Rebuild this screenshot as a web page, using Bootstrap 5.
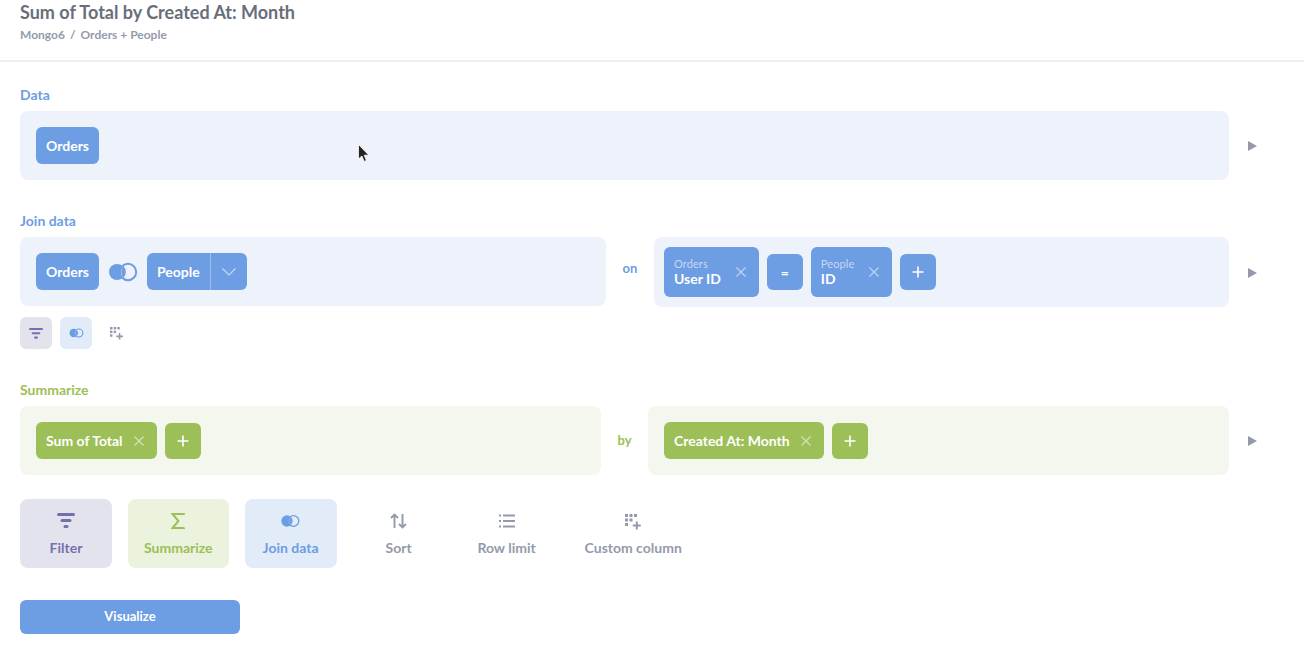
<!DOCTYPE html>
<html lang="en">
<head>
<meta charset="utf-8">
<title>Sum of Total by Created At: Month</title>
<link rel="stylesheet" href="https://cdn.jsdelivr.net/npm/bootstrap@5.3.0/dist/css/bootstrap.min.css">
<style>
body{font-family:Lato,"Liberation Sans",sans-serif;background:#fff;color:#696e7b;font-weight:700}
.qb-head{height:62px;border-bottom:2px solid #eeeff0;padding-left:20px}
.qb-title{font-size:18px;line-height:24px;color:#696e7b;margin:0;font-weight:700}
.qb-crumb{font-size:12px;line-height:16px;color:#949aab;margin-top:3px}
.qb-crumb span{margin:0 5px}
.qb-main{padding:23px 0 0 20px;position:relative}
.qb-label{font-size:14px;line-height:20px;margin-bottom:6px}
.t-blue{color:#6d9de3}.t-green{color:#9cbf57}
.qb-sec{margin-bottom:31px}
.qb-sec.tight{margin-bottom:24px}
.qb-panel{border-radius:8px;padding:16px;height:69px;background:#eef3fb}
.qb-panel.green{background:#f4f7ed}
.qb-panel.cond{padding:10px;height:70px}
.qb-wide{width:1209px}
.qb-left-join{width:586px}
.qb-half{width:581px}
.qb-word{width:48px;text-align:center;font-size:13px}
.qb-word.by{width:47px}
.qb-arrow{margin-left:19px;width:0;height:0;border-left:9px solid #949aab;border-top:5px solid transparent;border-bottom:5px solid transparent}
.qb-pill{display:inline-flex;align-items:center;height:37px;padding:0 10px;border-radius:6px;color:#fff;font-size:14px;background:#6d9de3}
.qb-pill.green{background:#9cbf57}
.qb-sq{display:inline-flex;align-items:center;justify-content:center;width:36px;height:36px;border-radius:6px;color:#fff;background:#6d9de3;font-size:14px}
.qb-sq.green{background:#9cbf57}
.qb-x{margin-left:10px;margin-right:2px;display:block;opacity:.55}
.qb-token{display:inline-flex;align-items:center;height:50px;padding:0 12px 0 10px;border-radius:6px;background:#6d9de3;color:#fff;font-size:14px}
.qb-token small{display:block;font-size:11px;line-height:13px;font-weight:400;color:#c5d8f4;letter-spacing:.1px}
.qb-token b{display:block;line-height:17px;font-weight:700}
.qb-token .tk-txt{margin-top:-1px}
.qb-split{padding:0;overflow:hidden}
.qb-split .sp-l{padding:0 10px;height:100%;display:flex;align-items:center;border-right:1px solid #9ebde9}
.qb-split .sp-r{width:36px;height:100%;display:flex;align-items:center;justify-content:center}
.qb-mini{width:32px;height:32px;border-radius:6px;display:flex;align-items:center;justify-content:center}
.bg-fil{background:#e3e3ee}.bg-sum{background:#ebf2de}.bg-joi{background:#e2ebf8}
.qb-tile{min-width:92px;height:69px;padding:0 16px;border-radius:8px;font-size:14px;display:flex;flex-direction:column;align-items:center;text-align:center}
.qb-tile svg{display:block;margin-top:13px;height:18px}
.qb-tile div{margin-top:8px;line-height:20px}
.t-pur{color:#7172ad}.t-gray{color:#949aab}
.qb-vis{width:220px;height:34px;margin-top:32px;background:#6d9de3;border:0;border-radius:6px;color:#fff;font-weight:700;font-size:13px;padding:0}
.qb-cursor{position:absolute;left:358px;top:82px;display:block}
</style>
</head>
<body>
<header class="qb-head">
  <h1 class="qb-title">Sum of Total by Created At: Month</h1>
  <div class="qb-crumb">Mongo6<span>/</span>Orders + People</div>
</header>
<main class="qb-main">
  <section class="qb-sec">
    <div class="qb-label t-blue">Data</div>
    <div class="d-flex align-items-center">
      <div class="qb-panel qb-wide d-flex align-items-center"><span class="qb-pill">Orders</span></div>
      <div class="qb-arrow"></div>
    </div>
  </section>

  <section class="qb-sec">
    <div class="qb-label t-blue">Join data</div>
    <div class="d-flex align-items-start">
      <div class="qb-panel qb-left-join d-flex align-items-center">
        <span class="qb-pill">Orders</span>
        <svg class="mx-2" width="32" height="20" viewBox="0 0 32 20" style="display:block"><circle cx="10" cy="10" r="8" fill="#6d9de3"/><circle cx="21" cy="10" r="8.2" fill="#eef3fb" stroke="#6d9de3" stroke-width="2"/><path d="M16.5 4a9 9 0 0 1 0 12 9 9 0 0 1 0-12z" fill="#6d9de3"/></svg>
        <span class="qb-pill qb-split"><span class="sp-l">People</span><span class="sp-r"><svg width="16" height="10" viewBox="0 0 16 10"><path d="M1.5 1.5 8 8l6.5-6.5" fill="none" stroke="#c5d8f4" stroke-width="1.2"/></svg></span></span>
      </div>
      <div class="qb-word t-blue" style="line-height:62px">on</div>
      <div class="qb-panel cond flex-grow-1 d-flex align-items-center gap-2" style="max-width:575px">
        <span class="qb-token"><span class="tk-txt"><small>Orders</small><b>User ID</b></span><svg class="qb-x" width="12" height="12" viewBox="0 0 12 12" style="margin-left:14px;margin-right:0"><path d="M1.5 1.5l9 9m0-9l-9 9" stroke="#fff" stroke-width="1.3"/></svg></span>
        <span class="qb-sq">=</span>
        <span class="qb-token"><span class="tk-txt"><small>People</small><b>ID</b></span><svg class="qb-x" width="12" height="12" viewBox="0 0 12 12" style="margin-left:14px;margin-right:0"><path d="M1.5 1.5l9 9m0-9l-9 9" stroke="#fff" stroke-width="1.3"/></svg></span>
        <span class="qb-sq"><svg width="12" height="12" viewBox="0 0 12 12"><path d="M6 .5v11M.5 6h11" stroke="#fff" stroke-width="1.6"/></svg></span>
      </div>
      <div class="qb-arrow" style="margin-top:31px"></div>
    </div>
    <div class="d-flex gap-2" style="margin-top:10px">
      <div class="qb-mini bg-fil"><svg width="14" height="11" viewBox="0 0 18 14"><rect x="0" y="0" width="18" height="2.6" rx="1.3" fill="#7172ad"/><rect x="3.5" y="5.5" width="11" height="2.6" rx="1.3" fill="#7172ad"/><rect x="6.5" y="11" width="5" height="2.6" rx="1.3" fill="#7172ad"/></svg></div>
      <div class="qb-mini bg-joi"><svg width="15" height="10" viewBox="0 0 32 20"><circle cx="10" cy="10" r="9" fill="#6d9de3"/><circle cx="21" cy="10" r="8.5" fill="#e2ebf8" stroke="#6d9de3" stroke-width="2.4"/><path d="M16.5 3.5a9 9 0 0 1 0 13 9 9 0 0 1 0-13z" fill="#6d9de3"/></svg></div>
      <div class="qb-mini"><svg width="13" height="13" viewBox="0 0 16 16"><g fill="#949aab"><rect x="0" y="0" width="3" height="3"/><rect x="4.5" y="0" width="3" height="3"/><rect x="9" y="0" width="3" height="3"/><rect x="0" y="4.5" width="3" height="3"/><rect x="4.5" y="4.5" width="3" height="3"/><rect x="0" y="9" width="3" height="3"/><path d="M10.8 7.5h2v3h3v2h-3v3h-2v-3h-3v-2h3z"/></g></svg></div>
    </div>
  </section>

  <section class="qb-sec tight">
    <div class="qb-label t-green">Summarize</div>
    <div class="d-flex align-items-center">
      <div class="qb-panel green qb-half d-flex align-items-center gap-2">
        <span class="qb-pill green">Sum of Total<svg class="qb-x" width="12" height="12" viewBox="0 0 12 12"><path d="M1.5 1.5l9 9m0-9l-9 9" stroke="#fff" stroke-width="1.3"/></svg></span>
        <span class="qb-sq green"><svg width="12" height="12" viewBox="0 0 12 12"><path d="M6 .5v11M.5 6h11" stroke="#fff" stroke-width="1.6"/></svg></span>
      </div>
      <div class="qb-word by t-green">by</div>
      <div class="qb-panel green qb-half d-flex align-items-center gap-2">
        <span class="qb-pill green">Created At: Month<svg class="qb-x" width="12" height="12" viewBox="0 0 12 12"><path d="M1.5 1.5l9 9m0-9l-9 9" stroke="#fff" stroke-width="1.3"/></svg></span>
        <span class="qb-sq green"><svg width="12" height="12" viewBox="0 0 12 12"><path d="M6 .5v11M.5 6h11" stroke="#fff" stroke-width="1.6"/></svg></span>
      </div>
      <div class="qb-arrow"></div>
    </div>
  </section>

  <div class="d-flex gap-3">
    <div class="qb-tile bg-fil t-pur"><svg width="18" height="18" viewBox="0 0 18 18"><g fill="#7172ad" transform="translate(0 1)"><rect x="0" y="0" width="18" height="3" rx="1.5"/><rect x="3.5" y="6" width="11" height="3" rx="1.5"/><rect x="6.5" y="12" width="5" height="3" rx="1.5"/></g></svg><div>Filter</div></div>
    <div class="qb-tile bg-sum t-green"><svg width="14" height="18" viewBox="0 0 14 18"><path d="M13 2.5V2H1.6L7.4 9 1.6 16H13v-.5" fill="none" stroke="#9cbf57" stroke-width="2"/></svg><div>Summarize</div></div>
    <div class="qb-tile bg-joi t-blue"><svg width="19" height="18" viewBox="0 0 32 30"><g transform="translate(0 5)"><circle cx="10" cy="10" r="9.5" fill="#6d9de3"/><circle cx="21" cy="10" r="9" fill="#e2ebf8" stroke="#6d9de3" stroke-width="2.2"/><path d="M16.5 3a9.5 9.5 0 0 1 0 14 9.500 9.500 0 0 1 0-14z" fill="#6d9de3"/></g></svg><div>Join data</div></div>
    <div class="qb-tile t-gray"><svg width="17" height="18" viewBox="0 0 17 18"><path d="M4.500 16V2.500M1 6l3.500-3.500L8 6M12.500 2v13.500M9 12l3.500 3.500L16 12" fill="none" stroke="#949aab" stroke-width="1.9"/></svg><div>Sort</div></div>
    <div class="qb-tile t-gray"><svg width="16" height="18" viewBox="0 0 16 18"><g fill="#949aab"><rect x="0" y="2.500" width="2" height="2"/><rect x="0" y="8" width="2" height="2"/><rect x="0" y="13.500" width="2" height="2"/><rect x="4" y="2.500" width="12" height="2"/><rect x="4" y="8" width="12" height="2"/><rect x="4" y="13.500" width="12" height="2"/></g></svg><div>Row limit</div></div>
    <div class="qb-tile t-gray"><svg width="16" height="18" viewBox="0 0 16 18"><g fill="#949aab" transform="translate(0 2)"><rect x="0" y="0" width="3" height="3"/><rect x="4.500" y="0" width="3" height="3"/><rect x="9" y="0" width="3" height="3"/><rect x="0" y="4.500" width="3" height="3"/><rect x="4.500" y="4.500" width="3" height="3"/><rect x="0" y="9" width="3" height="3"/><path d="M10.800 7.500h2v3h3v2h-3v3h-2v-3h-3v-2h3z"/></g></svg><div>Custom column</div></div>
  </div>

  <button type="button" class="btn qb-vis d-block">Visualize</button>

  <svg class="qb-cursor" width="12" height="19" viewBox="0 0 12 19"><path d="M.5.5v14.500l3.400-3 2.200 5.400 2.300-1-2.200-5.200h4.600z" fill="#222" stroke="#fff" stroke-width=".8"/></svg>
</main>
<script src="https://cdn.jsdelivr.net/npm/bootstrap@5.3.0/dist/js/bootstrap.bundle.min.js"></script>
</body>
</html>
